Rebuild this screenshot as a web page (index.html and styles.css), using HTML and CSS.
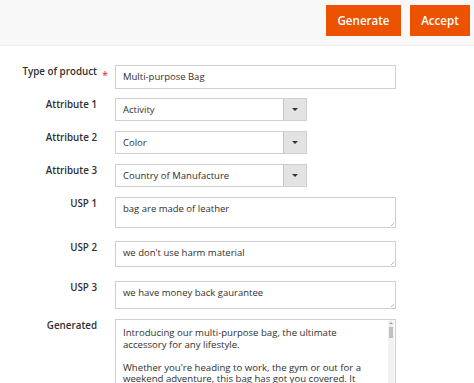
FILE: index.html
```html
<!DOCTYPE html>
<html>
<head>
<meta charset="utf-8">
<link rel="stylesheet" href="styles.css">
</head>
<body>
<div class="page">
  <header class="toolbar">
    <button class="btn">Generate</button>
    <button class="btn">Accept</button>
  </header>
  <form class="form">
    <div class="row row-input">
      <div class="label">Type of product</div>
      <div class="req">*</div>
      <div class="field"><div class="input">Multi-purpose Bag</div></div>
    </div>
    <div class="row row-select">
      <div class="label">Attribute 1</div>
      <div class="req"></div>
      <div class="field"><div class="select"><span class="select-text">Activity</span><span class="select-btn"><span class="arrow"></span></span></div></div>
    </div>
    <div class="row row-select">
      <div class="label">Attribute 2</div>
      <div class="req"></div>
      <div class="field"><div class="select"><span class="select-text">Color</span><span class="select-btn"><span class="arrow"></span></span></div></div>
    </div>
    <div class="row row-select">
      <div class="label">Attribute 3</div>
      <div class="req"></div>
      <div class="field"><div class="select"><span class="select-text">Country of Manufacture</span><span class="select-btn"><span class="arrow"></span></span></div></div>
    </div>
    <div class="row row-usp1">
      <div class="label">USP 1</div>
      <div class="req"></div>
      <div class="field"><div class="textarea ta-usp1">bag are made of leather<span class="grip"></span></div></div>
    </div>
    <div class="row row-usp2">
      <div class="label">USP 2</div>
      <div class="req"></div>
      <div class="field"><div class="textarea ta-usp2">we don't use harm material<span class="grip"></span></div></div>
    </div>
    <div class="row row-usp3">
      <div class="label">USP 3</div>
      <div class="req"></div>
      <div class="field"><div class="textarea ta-usp3">we have money back gaurantee<span class="grip"></span></div></div>
    </div>
    <div class="row row-gen">
      <div class="label">Generated</div>
      <div class="req"></div>
      <div class="field">
        <div class="textarea ta-gen">
          <div class="gen-text">
            <p>Introducing our multi-purpose bag, the ultimate accessory for any lifestyle.</p>
            <p>Whether you're heading to work, the gym or out for a weekend adventure, this bag has got you covered. It offers plenty of room for all your essentials.</p>
          </div>
          <div class="scrollbar"><span class="sb-up"></span><span class="sb-thumb"></span></div>
        </div>
      </div>
    </div>
  </form>
</div>
</body>
</html>
```

FILE: styles.css
```css
html, body {
  margin: 0;
  padding: 0;
  background: #ffffff;
}
body {
  font-family: "Open Sans", "Liberation Sans", sans-serif;
  color: #303030;
  width: 474px;
  height: 383px;
  overflow: hidden;
}
.toolbar {
  height: 46px;
  background: #f8f8f8;
  border-bottom: 1px solid #f0f0f0;
  box-sizing: border-box;
  display: flex;
  justify-content: flex-end;
  align-items: flex-start;
  gap: 9px;
  padding: 5px 4px 0 0;
}
.btn {
  height: 31px;
  background: #eb5202;
  color: #ffffff;
  border: none;
  font-family: "Open Sans", "Liberation Sans", sans-serif;
  font-weight: 600;
  font-size: 11.6px;
  padding: 0;
  margin: 0;
}
.btn:first-child { width: 75px; }
.btn:last-child { width: 60px; }
.form {
  padding-top: 19px;
  display: flex;
  flex-direction: column;
}
.row {
  display: grid;
  grid-template-columns: 97px 18px 1fr;
  align-items: start;
}
.label {
  text-align: right;
  font-weight: 600;
  font-size: 9.8px;
  line-height: 14px;
  padding-top: 0;
  color: #303030;
}
.req {
  color: #e22626;
  font-size: 11px;
  line-height: 14px;
  padding-top: 3px;
  padding-left: 5px;
}
.row-input { margin-bottom: 9px; }
.row-select { margin-bottom: 10px; }
.row-usp1 { margin-bottom: 13px; }
.row-usp2 { margin-bottom: 14px; }
.row-usp3 { margin-bottom: 10px; }
.input, .select, .textarea {
  box-sizing: border-box;
  border: 1px solid #cfcfcf;
  background: #fff;
  font-size: 9.5px;
  color: #303030;
}
.input {
  width: 281px;
  height: 24px;
  line-height: 22px;
  padding: 0 7px;
}
.select {
  width: 192px;
  height: 23px;
  display: flex;
  align-items: stretch;
}
.select-text {
  flex: 1;
  line-height: 21px;
  padding-left: 7px;
}
.select-btn {
  width: 22px;
  background: #e3e3e3;
  border-left: 1px solid #c4c4c4;
  display: flex;
  align-items: center;
  justify-content: center;
}
.arrow {
  width: 0;
  height: 0;
  border-left: 3px solid transparent;
  border-right: 3px solid transparent;
  border-top: 3px solid #333;
}
.textarea {
  width: 281px;
  position: relative;
  padding: 4px 7px 3px;
  line-height: 13px;
}
.ta-usp1 { height: 31px; }
.ta-usp2 { height: 26px; }
.ta-usp3 { height: 28px; }
.grip {
  position: absolute;
  right: 1px;
  bottom: 1px;
  width: 4px;
  height: 4px;
  background: linear-gradient(135deg, transparent 55%, #b8b8b8 55%, #b8b8b8 70%, transparent 70%);
}
.ta-gen {
  height: 80px;
  padding: 0 0 0 7px;
  display: flex;
}
.gen-text {
  flex: 1;
  padding-top: 7px;
  padding-right: 6px;
  line-height: 11.5px;
  font-size: 9.6px;
}
.gen-text p {
  margin: 0 0 11.5px 0;
}
.scrollbar {
  width: 6px;
  background: #f1f1f1;
  display: flex;
  flex-direction: column;
  align-items: center;
  margin-right: 1px;
}
.sb-up {
  width: 0;
  height: 0;
  margin-top: 2px;
  border-left: 2px solid transparent;
  border-right: 2px solid transparent;
  border-bottom: 2px solid #a0a0a0;
}
.sb-thumb {
  width: 4px;
  height: 11px;
  margin-top: 3px;
  background: #c1c1c1;
}
```
